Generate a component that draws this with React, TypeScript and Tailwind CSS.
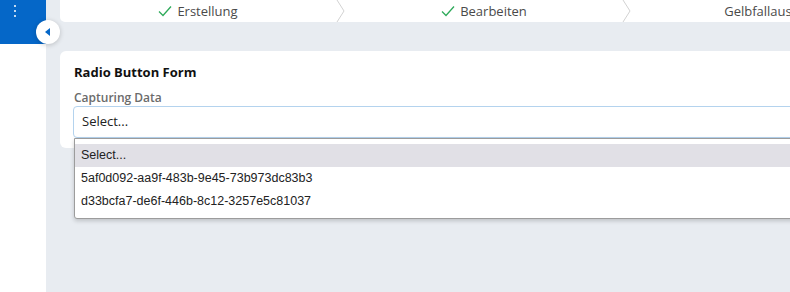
import React from 'react'

function Check() {
  return (
    <svg width="14" height="12" viewBox="0 0 14 12" className="mr-[5px]">
      <polyline points="1,6.5 5,10.5 13,1.5" fill="none" stroke="#2eaa5a" strokeWidth="1.3" />
    </svg>
  )
}

function Chevron() {
  return (
    <svg width="10" height="22" viewBox="0 0 10 22" className="shrink-0">
      <polyline points="1,0 8,11 1,22" fill="none" stroke="#d2d2d2" strokeWidth="1" />
    </svg>
  )
}

export default function App() {
  const options = ['Select...', '5af0d092-aa9f-483b-9e45-73b973dc83b3', 'd33bcfa7-de6f-446b-8c12-3257e5c81037']

  return (
    <div className="relative flex w-[790px] h-[292px] overflow-hidden bg-white font-['Open_Sans',sans-serif]">
      <aside className="w-[46px] shrink-0 flex flex-col">
        <div className="h-[44px] bg-[#0567c8] flex justify-center pt-[5px] pr-[1px]">
          <div className="flex flex-col gap-[3px] mr-[16px]">
            <span className="w-[2px] h-[2px] bg-white rounded-full" />
            <span className="w-[2px] h-[2px] bg-white rounded-full" />
            <span className="w-[2px] h-[2px] bg-white rounded-full" />
          </div>
        </div>
        <div className="flex-1 bg-white" />
      </aside>

      <main className="flex-1 min-w-0 bg-[#e8ecf1] pl-[14px]">
        <div className="h-[22px] w-[1000px] bg-white rounded-bl-[5px] flex text-[13px] text-[#4a4a4a] leading-[22px]">
          <div className="w-[276px] flex items-center justify-center">
            <Check />
            Erstellung
          </div>
          <Chevron />
          <div className="w-[276px] flex items-center justify-center">
            <Check />
            Bearbeiten
          </div>
          <Chevron />
          <div className="w-[296px] flex items-center justify-center">Gelbfallausschluss</div>
        </div>

        <section className="mt-[29px] w-[1000px] h-[97px] bg-white rounded-l-[6px] pl-[14px] pt-[12px]">
          <h2 className="text-[13px] font-bold text-[#111] leading-[18px]">Radio Button Form</h2>
          <label className="block mt-[10px] text-[12px] font-semibold text-[#6b6b6b] leading-[14px]">Capturing Data</label>
          <div className="relative mt-[1px] -ml-[1px]">
            <div className="h-[32px] border border-[#b4d3ee] rounded-l-[4px] px-[8px] flex items-center text-[13px] text-[#222] bg-white">
              Select...
            </div>
            <ul className="absolute left-[1px] top-[32px] w-[900px] bg-white border border-[#9c9c9c] rounded-bl-[3px] shadow-[0_2px_4px_rgba(0,0,0,0.18)] pt-[5px] pb-[5px] font-['Liberation_Sans',Arial,sans-serif] text-[12.5px] text-[#222] z-10">
              {options.map((o, i) => (
                <li key={o} className={`h-[23px] leading-[23px] pl-[6px] ${i === 0 ? 'bg-[#e1e0e6]' : ''}`}>
                  {o}
                </li>
              ))}
            </ul>
          </div>
        </section>
      </main>

      <button className="absolute left-[36px] top-[20px] w-[24px] h-[24px] rounded-full bg-white shadow-[0_1px_5px_rgba(0,0,0,0.2)] flex items-center justify-center">
        <svg width="8" height="10" viewBox="0 0 8 10">
          <polygon points="6,1 6,9 1,5" fill="#0567c8" />
        </svg>
      </button>
    </div>
  )
}
